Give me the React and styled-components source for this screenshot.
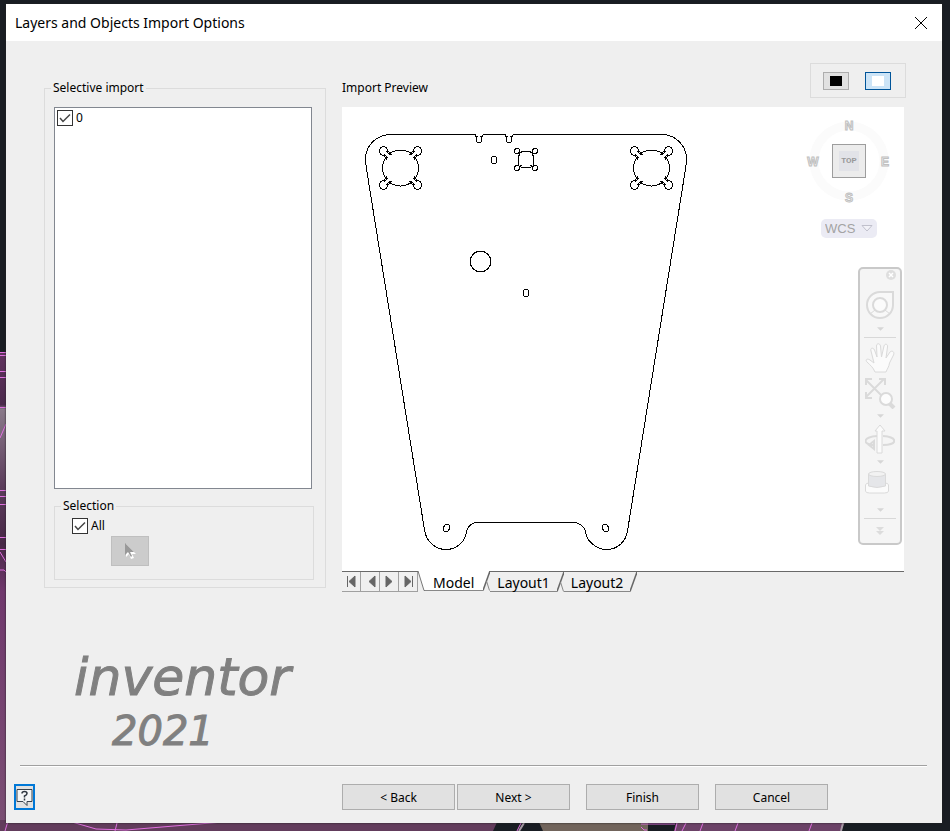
import React, { useState } from "react";
import styled, { createGlobalStyle } from "styled-components";

const LOBE_ANGLES = [45, 135, 225, 315];

const DesktopArt = () => (
  <Art viewBox="0 0 950 831" preserveAspectRatio="none" aria-hidden="true">
    <defs>
      <linearGradient id="model" x1="0" y1="0" x2="0" y2="1">
        <stop offset="0" stopColor="#61325f" />
        <stop offset="0.11" stopColor="#4b2a4c" />
        <stop offset="0.12" stopColor="#8a7a8a" />
        <stop offset="0.28" stopColor="#5c3d5c" />
        <stop offset="0.4" stopColor="#482847" />
        <stop offset="0.5" stopColor="#70386d" />
        <stop offset="1" stopColor="#7b5074" />
      </linearGradient>
    </defs>
    <rect width="950" height="831" fill="#191d23" />
    <rect y="352" width="20" height="479" fill="url(#model)" />
    <path d="M0 820H498L493 831H0z" fill="#623c5c" />
    <path d="M539 822H648V831H543z" fill="#71645b" />
    <path d="M676 822H845L841 831H674z" fill="#6b4267" />
    <g fill="none" stroke="#df6fdf">
      <path d="M0 352.5h6M0 355.5h6M0 371.5h6M0 377.5h6M0 407.5h6M0 490.5h6M0 496.5h6M0 504.5h6M0 537.5h6M0 549.5h6M0 438l6-14M0 552l6 10M0 570h4l2 2" />
      <path d="M5 831l3-10M72 822l24 7 30 1 60-5 50-4M117 823l-2 8" />
      <path d="M521 823l-4 8M641 824h34M641 827l3 3h3M677 823l-2 8M686 823l-4 8M703 823l-3 8M738 823l-3 8M812 823l-3 8" />
    </g>
    <path d="M524 823l-5 8M843 823l-2 8" stroke="#a79aa6" strokeWidth="2" />
  </Art>
);

const FanHole = ({ x, y }) => (
  <g transform={`translate(${x} ${y})`}>
    <circle r="18" />
    {LOBE_ANGLES.map((angle) => (
      <g key={angle} transform={`rotate(${angle})`}>
        <circle cx="24" r="4.3" />
        <rect x="16" y="-2" width="5" height="4" fill="#fff" stroke="none" />
        <path d="M16 -4l1 2h5M16 4l1 -2h5M17 -3h3M17 3h3" />
      </g>
    ))}
  </g>
);

const PlateDrawing = () => (
  <Drawing viewBox="342 107 562 464" role="img" aria-label="Plate outline">
    <g fill="none" stroke="#000" shapeRendering="crispEdges">
      <path d="M475.5 134.5H391C376 134.5 365.5 146 365.5 159Q365.5 163 366.5 169L424.5 530C426 541 435 549.5 446 549.5C457 549.5 466 541 466.5 531C468 526 472 522.5 478 522.5H574C580 522.5 584 527 585.5 531C586 541 596 549.5 607 549.5C617 549.5 626 542 627.5 531L685.5 169Q686.5 163 686.5 159C686.5 146 676 134.5 662 134.5H512.5M482.5 134.5H505.5" />
      <path d="M475.5 134.5v2h2v-1M482.5 134.5v2h-2v-1M476.5 136.5v5l1 1h3l1-1v-5" />
      <path d="M505.5 134.5v2h2v-1M512.5 134.5v2h-2v-1M506.5 136.5v5l1 1h3l1-1v-5" />
      <FanHole x={400.5} y={168} />
      <FanHole x={651.5} y={168} />
      <path d="M521 151.5h10M521 167.5h10M518.5 155v9M533.5 155v9M519 152l3 1M519 153l1 3M533 152l-3 1M533 153l-1 3M519 167l3-2M518 166l1-3M533 167l-3-2M534 166l-1-3" />
      <circle cx="517" cy="151" r="2.5" />
      <circle cx="535" cy="151" r="2.5" />
      <circle cx="517" cy="168" r="2.5" />
      <circle cx="535" cy="168" r="2.5" />
      <rect x="491.5" y="156.5" width="5" height="7" rx="2" />
      <rect x="523.5" y="289.5" width="5" height="7" rx="2" />
      <circle cx="480.5" cy="261.5" r="10.3" />
      <ellipse cx="446.5" cy="528" rx="3" ry="4" transform="rotate(20 446.5 528)" />
      <ellipse cx="605.5" cy="528" rx="3" ry="4" transform="rotate(-20 605.5 528)" />
    </g>
  </Drawing>
);

const TickBox = ({ label }) => {
  const [checked, setChecked] = useState(true);
  return (
    <TickLabel>
      <Tick
        type="checkbox"
        checked={checked}
        onChange={(e) => setChecked(e.target.checked)}
      />
      {checked && (
        <TickMark viewBox="0 0 16 16" aria-hidden="true">
          <path d="M3 8l3 3.5 7-7" fill="none" stroke="#444" strokeWidth="1.5" />
        </TickMark>
      )}
      {label}
    </TickLabel>
  );
};

const DropArrow = () => (
  <Caret viewBox="0 0 8 4" aria-hidden="true">
    <path d="M0 0h8L4 4z" fill="#d6d6d6" />
  </Caret>
);

const ViewCube = () => (
  <CubeArea>
    <Compass viewBox="0 0 88 88" aria-hidden="true">
      <circle cx="44" cy="44" r="35" fill="none" stroke="#fbfbfb" strokeWidth="9" />
      <g
        fill="#f1f1f1"
        stroke="#c0c0c0"
        fontFamily="Liberation Sans, sans-serif"
        fontSize="12"
        fontWeight="700"
        textAnchor="middle"
      >
        <text x="44" y="13">N</text>
        <text x="8" y="49">W</text>
        <text x="80" y="49">E</text>
        <text x="44" y="85">S</text>
      </g>
    </Compass>
    <CubeFace>
      <span>TOP</span>
    </CubeFace>
    <Wcs>
      <WcsSelect aria-label="Coordinate system">
        <option>WCS</option>
      </WcsSelect>
      <WcsArrow viewBox="0 0 12 7" aria-hidden="true">
        <path d="M1 .5h10L6 6z" fill="#f2f2f8" stroke="#c0c0cc" />
      </WcsArrow>
    </Wcs>
  </CubeArea>
);

const NavigationBar = () => (
  <NavBar>
    <NavClose aria-label="Close navigation bar">
      <svg width="10" height="10" viewBox="0 0 10 10">
        <circle cx="5" cy="5" r="5" fill="#dedede" />
        <path d="M3 3l4 4M7 3l-4 4" stroke="#fff" strokeWidth="1.5" />
      </svg>
    </NavClose>
    <NavButton $height={47} aria-label="Steering wheel">
      <svg width="30" height="30" viewBox="0 0 30 30">
        <path d="M15 2h13v13A13 13 0 1 1 15 2z" fill="#f8f8f8" strokeWidth="2" />
        <circle cx="15" cy="15" r="7" fill="#fbfbfb" strokeWidth="2" />
        <path d="M5 24l5-4M25 24l-5-4" />
      </svg>
      <DropArrow />
    </NavButton>
    <NavRule />
    <NavButton $height={39} aria-label="Pan">
      <svg width="30" height="32" viewBox="0 0 30 32">
        <path
          fill="#fbfbfb"
          d="M10 30C8 25 5 23 2 20C0 18 2 16 5 18L9 21L6 9C5 6 8 5 9.500 8L12 15L11.500 4C11.500 1 15 1 15.500 4L16.500 15L19 4C20 1 23 2 22.500 5L21 16L25 10C27 8 30 10 28.500 13L24.500 21C24 25 22 27 21 30z"
        />
      </svg>
    </NavButton>
    <NavButton $height={47} aria-label="Zoom all">
      <svg width="32" height="32" viewBox="0 0 32 32">
        <path d="M2 3l18 18M20 2L2 20M2 8V2h6M15 2h6v6M2 15v6h6" strokeWidth="2" />
        <path d="M25 26l5 5" strokeWidth="4" />
        <circle cx="22" cy="22" r="6" fill="#fcfcfc" strokeWidth="2" />
      </svg>
      <DropArrow />
    </NavButton>
    <NavButton $height={46} aria-label="Orbit">
      <svg width="30" height="30" viewBox="0 0 30 30">
        <path
          d="M12 12C-3 13 -3 21 10 21M18 12C33 13 33 21 18 21M9 17l-5 4 5 4z"
          strokeWidth="2"
        />
        <path d="M15 1l5 6h-3v22h-5V7H10z" fill="#fbfbfb" />
      </svg>
      <DropArrow />
    </NavButton>
    <NavButton $height={48} aria-label="Look at">
      <svg width="30" height="30" viewBox="0 0 30 30">
        <path d="M0.500 15q0-2 4-2h15q4 0 4 2v6q0 2-4 2h-15q-4 0-4-2z" fill="#fbfbfb" />
        <path d="M3.500 4v12q8.500 3 17 0V4z" fill="#e5e6e9" />
        <ellipse cx="12" cy="4" rx="8.500" ry="2.500" fill="#f2f2f2" />
      </svg>
      <DropArrow />
    </NavButton>
    <NavRule />
    <NavButton $height={24} aria-label="Customize">
      <svg width="8" height="9" viewBox="0 0 8 9">
        <path d="M0 0h8L4 4zM0 4h8L4 8z" fill="#dcdcdc" stroke="none" />
      </svg>
    </NavButton>
  </NavBar>
);

const SHEET_ARROWS = [
  { name: "First sheet", path: "M5.5 4v11M13 4v11L7 9.5z" },
  { name: "Previous sheet", path: "M14 4v11L8 9.5z" },
  { name: "Next sheet", path: "M6 4v11l6-5.5z" },
  { name: "Last sheet", path: "M6 4v11l6-5.5zM13.5 4v11" },
];

const SheetTab = ({ children, active, last }) => (
  <TabButton role="tab" aria-selected={Boolean(active)} $active={active}>
    {active && (
      <svg width="7" height="20" viewBox="0 0 7 20">
        <path d="M0 0L6 19.5H7V0z" fill="#fff" />
        <path d="M0 0L6 19.5H7" fill="none" stroke="#777" />
      </svg>
    )}
    <TabText $active={active}>{children}</TabText>
    <svg width="7" height="20" viewBox="0 0 7 20">
      {active && <path d="M0 0H7L0 20z" fill="#fff" />}
      <path d="M7 0L0 19.5" fill="none" stroke="#666" strokeWidth="1.5" />
      {!last && <path d="M3.5 10l3 9.5" fill="none" stroke="#888" />}
    </svg>
  </TabButton>
);

const App = () => {
  const [background, setBackground] = useState("white");

  return (
    <>
      <GlobalStyle />
      <Desktop>
        <DesktopArt />
        <Dialog>
          <TitleBar>
            <Title>Layers and Objects Import Options</Title>
            <CloseButton aria-label="Close">
              <svg width="12" height="12" viewBox="0 0 12 12">
                <path d="M0 0l12 12M12 0L0 12" stroke="#000" />
              </svg>
            </CloseButton>
          </TitleBar>

          <Content>
            <ImportGroup>
              <legend>Selective import</legend>
              <LayerList>
                <TickBox label="0" />
              </LayerList>
              <SelectionGroup>
                <legend>Selection</legend>
                <TickBox label="All" />
                <PickButton disabled aria-label="Pick objects">
                  <svg width="12" height="18" viewBox="0 0 12 18">
                    <path d="M2 2v13l3-3 2 5 3-1-2-4h4z" fill="#fff" />
                    <path d="M1 1v12l3-3 3 5 1-1-2-4h4z" fill="#999" />
                  </svg>
                </PickButton>
              </SelectionGroup>
            </ImportGroup>

            <PreviewColumn>
              <PreviewHeader>
                <PreviewTitle>Import Preview</PreviewTitle>
                <SwatchBox>
                  <Swatch
                    $color="#000"
                    $selected={background === "black"}
                    aria-label="Black background"
                    onClick={() => setBackground("black")}
                  />
                  <Swatch
                    $color="#fff"
                    $selected={background === "white"}
                    aria-label="White background"
                    onClick={() => setBackground("white")}
                  />
                </SwatchBox>
              </PreviewHeader>
              <Preview>
                <PlateDrawing />
                <ViewCube />
                <NavigationBar />
              </Preview>
              <Sheets>
                {SHEET_ARROWS.map((arrow) => (
                  <SheetArrow key={arrow.name} aria-label={arrow.name}>
                    <svg width="18" height="19" viewBox="0 0 18 19">
                      <path d={arrow.path} fill="#666" stroke="#666" />
                    </svg>
                  </SheetArrow>
                ))}
                <Tabs role="tablist">
                  <SheetTab active>Model</SheetTab>
                  <SheetTab>Layout1</SheetTab>
                  <SheetTab last>Layout2</SheetTab>
                </Tabs>
              </Sheets>
            </PreviewColumn>
          </Content>

          <Note>
            <NoteLine $size={52}>inventor</NoteLine>
            <NoteLine $size={40} $indent={38}>2021</NoteLine>
          </Note>

          <Footer>
            <HelpButton aria-label="Help">
              <svg width="17" height="20" viewBox="0 0 17 20">
                <path d="M1 2.5h15v12h-5v4l-4-4H1z" fill="#f4f6f7" stroke="#39424c" />
                <path
                  d="M6 6.5Q6 4.5 8.5 4.5T11 6.5Q11 8 8.5 9V10.5M8.5 11.5v2"
                  fill="none"
                  stroke="#2f3740"
                  strokeWidth="1.5"
                />
              </svg>
            </HelpButton>
            <StepButtons>
              <StepButton>&lt; Back</StepButton>
              <StepButton>Next &gt;</StepButton>
            </StepButtons>
            <StepButton>Finish</StepButton>
            <StepButton>Cancel</StepButton>
          </Footer>
        </Dialog>
      </Desktop>
    </>
  );
};

export default App;

const GlobalStyle = createGlobalStyle`
  * {
    box-sizing: border-box;
  }

  body {
    margin: 0;
    background: #191d23;
    color: #000;
    font-family: "Noto Sans", sans-serif;
    font-size: 12px;
    line-height: 16px;
  }

  button, select, input {
    margin: 0;
    padding: 0;
    font: inherit;
    color: inherit;
  }

  svg {
    display: block;
    flex: none;
  }
`;

const Desktop = styled.div`
  position: relative;
  display: flex;
  min-height: 100vh;
  padding: 4px 8px 8px 6px;
`;

const Art = styled.svg`
  position: absolute;
  inset: 0;
  width: 100%;
  height: 100%;
`;

const Dialog = styled.main`
  position: relative;
  flex: 1;
  display: flex;
  flex-direction: column;
  background: #efefef;
  box-shadow: 0 0 2px #222;
`;

const TitleBar = styled.header`
  display: flex;
  align-items: center;
  justify-content: space-between;
  height: 37px;
  padding: 0 8px 0 9px;
  background: #fff;
`;

const Title = styled.h1`
  margin: 0;
  font-size: 14px;
  font-weight: 400;
`;

const CloseButton = styled.button`
  display: grid;
  place-items: center;
  width: 26px;
  height: 26px;
  border: 0;
  background: none;
`;

const Content = styled.div`
  display: grid;
  grid-template-columns: 282px 1fr;
  align-items: start;
  gap: 16px;
  padding: 22px 36px 0 38px;
`;

const Group = styled.fieldset`
  min-width: 0;
  margin: 0;
  border: 1px solid #dcdcdc;

  legend {
    padding: 0 2px;
  }
`;

const ImportGroup = styled(Group)`
  margin-top: 17px;
  padding: 11px 11px 7px 9px;

  > legend {
    margin-left: -3px;
  }
`;

const LayerList = styled.div`
  height: 382px;
  margin-right: 2px;
  padding: 2px;
  border: 1px solid #828790;
  background: #fff;
`;

const SelectionGroup = styled(Group)`
  margin-top: 9px;
  padding: 4px 17px 13px;

  > legend {
    margin-left: -11px;
  }
`;

const TickLabel = styled.label`
  position: relative;
  display: flex;
  align-items: center;
  gap: 3px;
  width: max-content;
`;

const Tick = styled.input`
  appearance: none;
  width: 16px;
  height: 16px;
  border: 1px solid #333;
  background: #fff;
`;

const TickMark = styled.svg`
  position: absolute;
  left: 0;
  top: 0;
  width: 16px;
  height: 16px;
  pointer-events: none;
`;

const PickButton = styled.button`
  display: grid;
  place-items: center;
  width: 38px;
  height: 30px;
  margin: 2px 0 0 39px;
  border: 1px solid #bfbfbf;
  background: #ccc;
`;

const PreviewColumn = styled.section`
  min-width: 0;
`;

const PreviewHeader = styled.div`
  display: flex;
  align-items: flex-start;
  justify-content: space-between;
  height: 44px;
`;

const PreviewTitle = styled.h2`
  margin: 17px 0 0;
  font-size: 12px;
  font-weight: 400;
`;

const SwatchBox = styled.div`
  display: flex;
  gap: 16px;
  padding: 8px 14px 7px 12px;
  border: 1px solid #dcdcdc;
`;

const Swatch = styled.button`
  width: 26px;
  height: 18px;
  border: 1px solid ${(props) => (props.$selected ? "#005499" : "#adadad")};
  background: ${(props) => (props.$selected ? "#cce4f7" : "#e1e1e1")};

  &::before {
    content: "";
    display: block;
    width: 12px;
    height: 10px;
    margin: auto;
    background: ${(props) => props.$color};
  }
`;

const Preview = styled.div`
  position: relative;
  margin-right: 2px;
  border-bottom: 1px solid #696969;
  background: #fff;
`;

const Drawing = styled.svg`
  width: 100%;
`;

/* floats over the top right corner of the preview */
const CubeArea = styled.div`
  position: absolute;
  top: 10px;
  right: 11px;
  display: grid;
  justify-items: center;
  width: 88px;
`;

const Compass = styled.svg`
  grid-area: 1 / 1;
  width: 88px;
  height: 88px;
`;

const CubeFace = styled.button`
  grid-area: 1 / 1;
  align-self: center;
  display: grid;
  place-items: center;
  width: 34px;
  height: 34px;
  border: 1px solid #9d9d9d;
  background: #ececec;

  span {
    width: 20px;
    background: #e2e3e8;
    color: #999;
    font-family: Roboto, sans-serif;
    font-size: 8px;
    font-weight: 700;
    line-height: 20px;
  }
`;

const Wcs = styled.div`
  position: relative;
  width: 56px;
  margin-top: 14px;
`;

const WcsSelect = styled.select`
  appearance: none;
  display: block;
  width: 100%;
  height: 19px;
  padding-left: 4px;
  border: 0;
  border-radius: 5px;
  background: #ebebf4;
  color: #a3a3a3;
  font-family: "Liberation Sans", sans-serif;
  font-size: 13px;
`;

const WcsArrow = styled.svg`
  position: absolute;
  top: 6px;
  right: 4px;
  width: 12px;
  height: 7px;
  pointer-events: none;
`;

const NavBar = styled.nav`
  position: absolute;
  top: 160px;
  right: 2px;
  display: flex;
  flex-direction: column;
  width: 44px;
  padding: 1px 4px 0;
  border: 2px solid #c9c9c9;
  border-radius: 5px;
  background: #f5f5f5;
`;

const NavClose = styled.button`
  align-self: flex-end;
  height: 20px;
  border: 0;
  background: none;

  svg {
    margin-bottom: 10px;
  }
`;

const NavButton = styled.button`
  display: flex;
  flex-direction: column;
  align-items: center;
  justify-content: space-between;
  height: ${(props) => props.$height}px;
  padding-bottom: 6px;
  border: 0;
  background: none;

  > svg {
    fill: none;
    stroke: #dadada;
  }

  > svg:only-child {
    margin: auto;
  }

  &:last-child,
  &:nth-of-type(3) {
    padding: 0;
  }
`;

const Caret = styled.svg`
  width: 7px;
  height: 4px;

  path {
    stroke: none;
  }
`;

const NavRule = styled.hr`
  width: 100%;
  margin: 0;
  border: 0;
  border-top: 1px solid #d8d8d8;
`;

const Sheets = styled.div`
  display: flex;
  height: 20px;
`;

const SheetArrow = styled.button`
  width: 19px;
  height: 20px;
  border: solid #a0a0a0;
  border-width: 0 1px 1px 0;
  background: #f0f0f0;
`;

const Tabs = styled.div`
  display: flex;
`;

const TabButton = styled.button`
  position: relative;
  display: flex;
  height: 20px;
  margin-top: ${(props) => (props.$active ? -1 : 0)}px;
  border: 0;
  background: none;
`;

const TabText = styled.span`
  height: 20px;
  padding: 0 7px;
  padding: ${(props) => (props.$active ? "0 9px 0 8px" : "0 7px")};
  border-bottom: 1px solid #888;
  background: ${(props) => (props.$active ? "#fff" : "transparent")};
  font-size: 14px;
  line-height: ${(props) => (props.$active ? 24 : 22)}px;
`;

const Note = styled.div`
  flex: 1;
  padding: 58px 36px 4px 68px;
  color: #808080;
  font-family: "DejaVu Sans", sans-serif;
  font-style: italic;
  -webkit-text-stroke: 1px #808080;
`;

const NoteLine = styled.div`
  padding-left: ${(props) => props.$indent || 0}px;
  font-size: ${(props) => props.$size}px;
  line-height: 54px;
`;

const Footer = styled.footer`
  display: flex;
  gap: 16px;
  margin: 0 15px 0 8px;
  padding: 19px 0 13px;
  background: linear-gradient(#a0a0a0 1px, #fff 1px, #fff 2px, transparent 2px)
    6px 0 no-repeat;
`;

const HelpButton = styled.button`
  display: grid;
  place-items: center;
  width: 21px;
  height: 26px;
  margin-right: 291px;
  border: 2px solid #0078d7;
  background: #e1e1e1;
`;

const StepButtons = styled.div`
  display: flex;
  gap: 2px;
`;

const StepButton = styled.button`
  width: 113px;
  height: 26px;
  padding-top: 2px;
  border: 1px solid #adadad;
  background: #e1e1e1;
`;
